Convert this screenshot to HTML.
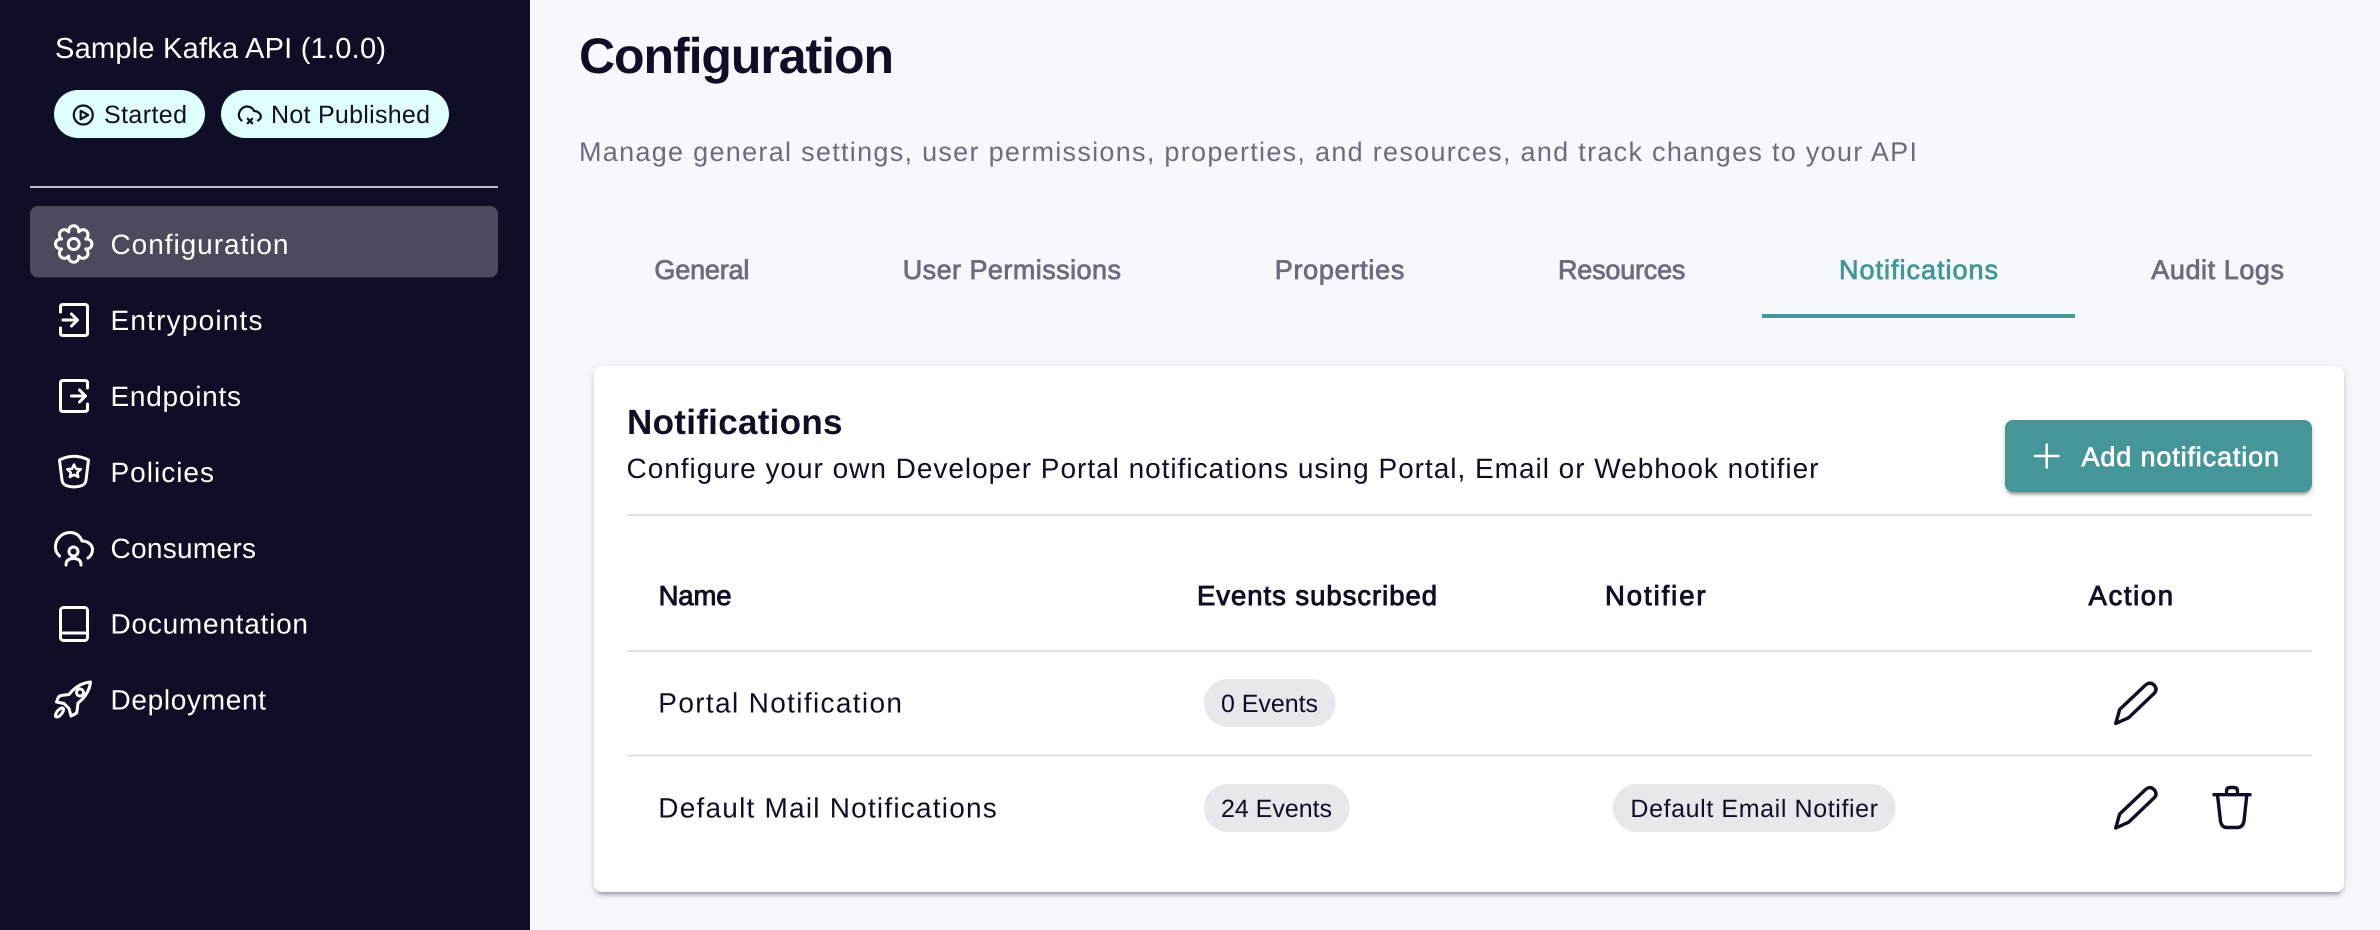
<!DOCTYPE html>
<html lang="en"><head><meta charset="utf-8"><title>Configuration</title>
<style>
html,body{margin:0;padding:0;width:2380px;height:930px;overflow:hidden;background:#f7f8fd;font-family:"Liberation Sans",sans-serif}
.side{position:absolute;left:0;top:0;width:530px;height:930px;background:#0e0e26}
.card{position:absolute;left:594px;top:366px;width:1750px;height:526px;background:#fff;border-radius:8px;box-shadow:0 6px 3px -4px rgba(0,0,0,.2),0 4px 4px rgba(0,0,0,.12),0 2px 10px rgba(0,0,0,.1)}
.btn{position:absolute;left:2005px;top:420px;width:307px;height:72px;background:#449699;border-radius:8px;box-shadow:0 5px 2px -3px rgba(0,0,0,.2),0 3px 3px rgba(0,0,0,.14),0 2px 6px rgba(0,0,0,.12)}
svg{position:absolute;left:0;top:0}
text{font-family:"Liberation Sans",sans-serif;text-rendering:geometricPrecision}
.w{fill:#fff;font-size:28px}
.c{fill:#0e0e26;font-size:25px}
.d{fill:#0e0e26;font-size:28px}
.h{fill:#0e0e26;font-size:27.5px;stroke:#0e0e26;stroke-width:.9px}
.t{fill:#6c6c80;font-size:27px;stroke:#6c6c80;stroke-width:.8px}
.wi{fill:none;stroke:#fff;stroke-width:3;stroke-linecap:round;stroke-linejoin:round}
.di{fill:none;stroke:#0e0e26;stroke-linecap:round;stroke-linejoin:round}
</style></head>
<body>
<div class="side"></div>
<div class="card"></div>
<div class="btn"></div>
<svg width="2380" height="930" viewBox="0 0 2380 930" xmlns="http://www.w3.org/2000/svg">
<!-- sidebar header -->
<text class="w" x="55" y="58" textLength="331" style="font-size:29px">Sample Kafka API (1.0.0)</text>
<rect x="54" y="90" width="151" height="48" rx="24" fill="#dffffe"/>
<rect x="221" y="90" width="228" height="48" rx="24" fill="#dffffe"/>
<g class="di" stroke-width="2.2">
<circle cx="83.3" cy="115" r="9.5"/>
<path d="M80.7 110.8L88.2 115L80.7 119.2Z"/>
<path d="M241.5 120.5Q238.3 118 239 114C239.5 110 243 106.5 247 106.5C250.5 106.5 253 108.5 254 111C258 111 260.8 114 260.8 116.5C260.8 118 260 119.5 258 120.5"/>
<path d="M247.8 118.8L252.2 123.2M252.2 118.8L247.8 123.2"/>
</g>
<text class="c" x="104" y="123" textLength="83">Started</text>
<text class="c" x="271" y="123" textLength="159">Not Published</text>
<rect x="30" y="186" width="468" height="2" fill="#bdbdc8"/>
<rect x="30" y="206" width="468" height="71.5" rx="8" fill="#4a4c5e"/>
<!-- nav -->
<text class="w" x="110.500" y="254" textLength="178">Configuration</text>
<text class="w" x="110.500" y="330" textLength="152">Entrypoints</text>
<text class="w" x="110.500" y="406" textLength="130.500">Endpoints</text>
<text class="w" x="110.500" y="482" textLength="103.500">Policies</text>
<text class="w" x="110.500" y="558" textLength="145.500">Consumers</text>
<text class="w" x="110.500" y="633.500" textLength="197.500">Documentation</text>
<text class="w" x="110.500" y="709.500" textLength="155.500">Deployment</text>
<!-- nav icons -->
<g class="wi">
<circle cx="73.7" cy="244" r="5.5"/>
<path d="M68.6 231.800C68.400 229 70.200 225.800 73.700 225.800C77.200 225.800 79 229 78.800 231.800"/>
<path transform="rotate(45 73.7 244)" d="M68.6 231.800C68.400 229 70.200 225.800 73.700 225.800C77.200 225.800 79 229 78.800 231.800"/>
<path transform="rotate(90 73.7 244)" d="M68.6 231.800C68.400 229 70.200 225.800 73.700 225.800C77.200 225.800 79 229 78.800 231.800"/>
<path transform="rotate(135 73.7 244)" d="M68.6 231.800C68.400 229 70.200 225.800 73.700 225.800C77.200 225.800 79 229 78.800 231.800"/>
<path transform="rotate(180 73.7 244)" d="M68.6 231.800C68.400 229 70.200 225.800 73.700 225.800C77.200 225.800 79 229 78.800 231.800"/>
<path transform="rotate(225 73.7 244)" d="M68.6 231.800C68.400 229 70.200 225.800 73.700 225.800C77.200 225.800 79 229 78.800 231.800"/>
<path transform="rotate(270 73.7 244)" d="M68.6 231.800C68.400 229 70.200 225.800 73.700 225.800C77.200 225.800 79 229 78.800 231.800"/>
<path transform="rotate(315 73.7 244)" d="M68.6 231.800C68.400 229 70.200 225.800 73.700 225.800C77.200 225.800 79 229 78.800 231.800"/>
<path d="M60.5 312V307Q60.500 304.500 63 304.500H85Q87.500 304.500 87.500 307V333Q87.500 335.500 85 335.500H63Q60.500 335.500 60.500 333V328"/>
<path d="M63 320H77M71.500 314L77.500 320L71.500 326"/>
<path d="M87.500 388V383Q87.500 380.500 85 380.500H63Q60.500 380.500 60.500 383V409Q60.500 411.500 63 411.500H85Q87.500 411.500 87.500 409V404"/>
<path d="M71.500 396H85M79.500 390L85.500 396L79.500 402"/>
<path d="M59.500 460Q74 452.500 88.500 460L86 480Q85.500 484 82 485.500Q74 488.500 66 485.500Q62.500 484 62 480Z"/>
<path stroke-width="2.500" d="M74 464.500L76 468.800L80.700 469.300L77.200 472.500L78.200 477L74 474.700L69.800 477L70.800 472.500L67.300 469.300L72 468.800Z"/>
<path d="M59.500 556Q55 552 55.500 546C56 538 63 532.500 70 532.500C76 532.500 80 536 82 541C88 541 92.500 545 92.500 549.500C92.500 553 91 556 88 558"/>
<circle cx="73.500" cy="551.500" r="4.500"/>
<path d="M66 565Q66 558.500 73.500 558.500Q81 558.500 81 565"/>
<rect x="60.500" y="607.500" width="27" height="33" rx="3"/>
<path d="M60.500 633H87.500"/>
<path d="M90.500 682Q80 683 72 691L69 694.500L61 695.500Q59 696 58 698L56.500 702L64 703.500L69 708.500L71 716L75 714Q77 713 77 711L78 703L81.500 700Q89.500 692 90.500 682Z"/>
<circle cx="80" cy="692.500" r="3.500"/>
<ellipse cx="59.500" cy="712.500" rx="5.500" ry="2.500" transform="rotate(-50 59.500 712.500)"/>
</g>
<!-- header -->
<text x="579" y="73" textLength="315" style="font-size:50px;font-weight:700;fill:#0e0e26">Configuration</text>
<text x="579" y="161" textLength="1338" style="font-size:27px;fill:#6c6c80">Manage general settings, user permissions, properties, and resources, and track changes to your API</text>
<!-- tabs -->
<text class="t" x="654.400" y="279" textLength="95">General</text>
<text class="t" x="902.700" y="279" textLength="218.300">User Permissions</text>
<text class="t" x="1274.700" y="279" textLength="129.700">Properties</text>
<text class="t" x="1558" y="279" textLength="127.400">Resources</text>
<text class="t" x="1839" y="279" textLength="159" style="fill:#43979a;stroke:#43979a">Notifications</text>
<text class="t" x="2151.300" y="279" textLength="132.700">Audit Logs</text>
<rect x="1762" y="314" width="313" height="4" fill="#44979a"/>
<!-- card head -->
<text x="627" y="434" textLength="215.500" style="font-size:35px;font-weight:700;fill:#0e0e26">Notifications</text>
<text class="d" x="626.500" y="478" textLength="1192">Configure your own Developer Portal notifications using Portal, Email or Webhook notifier</text>
<path d="M2046.700 444.500V467.500M2035 456H2058.500" stroke="#fff" stroke-width="2.500" stroke-linecap="round" fill="none"/>
<text x="2081.500" y="466" textLength="197.500" style="font-size:27px;fill:#fff;stroke:#fff;stroke-width:.7px">Add notification</text>
<rect x="627" y="514" width="1685" height="2" fill="#e0e0e0"/>
<!-- table -->
<text class="h" x="658.600" y="605" textLength="72.900">Name</text>
<text class="h" x="1197" y="605" textLength="240">Events subscribed</text>
<text class="h" x="1605" y="605" textLength="100.600">Notifier</text>
<text class="h" x="2088.500" y="605" textLength="84.500">Action</text>
<rect x="627" y="650" width="1685" height="2" fill="#e0e0e0"/>
<text class="d" x="658.300" y="712.500" textLength="243.700">Portal Notification</text>
<rect x="1204" y="679" width="131.500" height="48" rx="24" fill="#e7e7ec"/>
<text class="c" x="1221" y="712" textLength="97">0 Events</text>
<rect x="627" y="754.500" width="1685" height="2" fill="#e0e0e0"/>
<text class="d" x="658.300" y="817.500" textLength="338.500">Default Mail Notifications</text>
<rect x="1204" y="784" width="146" height="48" rx="24" fill="#e7e7ec"/>
<text class="c" x="1221" y="817" textLength="111">24 Events</text>
<rect x="1613" y="784" width="282.600" height="48" rx="24" fill="#e7e7ec"/>
<text class="c" x="1630.400" y="817" textLength="247.600">Default Email Notifier</text>
<!-- action icons -->
<g class="di" stroke-width="3.400">
<path d="M2115.700 723.500L2119.700 709.500L2145 685.500Q2150 681 2154 685Q2158 689.500 2154 693.500L2128.500 717.800Z"/>
<path d="M2115.700 828L2119.700 814L2145 790Q2150 785.500 2154 789.500Q2158 794 2154 798L2128.500 822.300Z"/>
<path d="M2214 794.700H2250"/>
<path d="M2217.500 795L2220.500 821Q2221.500 827.500 2227 827.500H2237Q2243 827.500 2244 821L2246.800 795"/>
<path d="M2226.500 794V791Q2226.500 787.500 2230 787.500H2234Q2237.500 787.500 2237.500 791V794"/>
</g>
</svg>
</body></html>
